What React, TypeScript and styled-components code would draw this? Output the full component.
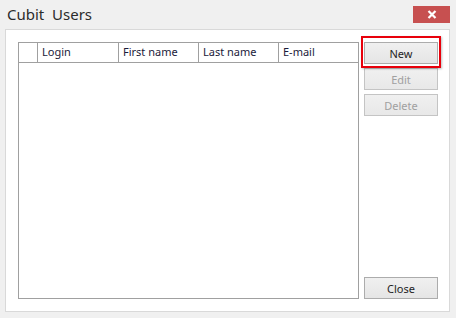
import styled, { createGlobalStyle } from "styled-components";

const GlobalStyle = createGlobalStyle`
  html, body {
    margin: 0;
    padding: 0;
    background: #f0f0f0;
  }
  body {
    font-family: "Noto Sans", "Open Sans", sans-serif;
    font-size: 11px;
    color: #1e1e1e;
  }
`;

const Window = styled.div`
  width: 456px;
  height: 318px;
  box-sizing: border-box;
  display: flex;
  flex-direction: column;
  padding: 0 6px 6px 5px;
`;

const TitleBar = styled.div`
  height: 29px;
  display: flex;
  align-items: flex-start;
  justify-content: space-between;
`;

const Title = styled.div`
  font-size: 15px;
  color: #2b2b2b;
  padding: 4px 0 0 2px;
  white-space: pre;
`;

const CloseX = styled.button`
  width: 37px;
  height: 17px;
  margin-top: 6px;
  border: none;
  padding: 0;
  background: #c75050;
  display: flex;
  align-items: center;
  justify-content: center;
`;

const Panel = styled.div`
  flex: 1;
  background: #ffffff;
  border: 1px solid #d9d9d9;
  padding: 12px 11px 12px 12px;
  display: flex;
  gap: 5px;
`;

const Grid = styled.div`
  flex: 1;
  border: 1px solid #a0a0a0;
  background: #fff;
`;

const HeaderRow = styled.div`
  display: grid;
  grid-template-columns: 19px 81px 80px 80px 1fr;
  height: 20px;
  box-sizing: border-box;
  border-bottom: 1px solid #a0a0a0;
`;

const HeaderCell = styled.div`
  border-right: 1px solid #a0a0a0;
  padding-left: 4px;
  line-height: 18px;
  color: #1a1a3a;
  white-space: nowrap;
  &:last-child {
    border-right: none;
  }
`;

const Side = styled.div`
  width: 74px;
  display: flex;
  flex-direction: column;
  gap: 4px;
`;

const Spacer = styled.div`
  flex: 1;
`;

const ButtonWrap = styled.div`
  position: relative;
  display: flex;
`;

const Highlight = styled.div`
  position: absolute;
  left: -3px;
  right: -3px;
  top: -6px;
  bottom: -4px;
  border: 2px solid #e8000b;
  box-shadow: 1px 1px 2px rgba(0, 0, 0, 0.25);
  pointer-events: none;
`;

const Button = styled.button<{ $disabled?: boolean }>`
  width: 74px;
  height: 22px;
  box-sizing: border-box;
  font-family: inherit;
  font-size: 11px;
  padding: 0;
  border: 1px solid ${(p) => (p.$disabled ? "#c4c4c4" : "#acacac")};
  background: ${(p) =>
    p.$disabled
      ? "linear-gradient(#f0f0f0, #e8e8e8)"
      : "linear-gradient(#f0f0f0, #e5e5e5)"};
  color: ${(p) => (p.$disabled ? "#a0a0a0" : "#1e1e1e")};
`;

export default function App() {
  return (
    <>
      <GlobalStyle />
      <Window>
        <TitleBar>
          <Title>Cubit  Users</Title>
          <CloseX aria-label="Close">
            <svg width="10" height="9" viewBox="0 0 10 9">
              <path d="M1.5 1 L8.5 8 M8.5 1 L1.5 8" stroke="#fff" strokeWidth="2.2" />
            </svg>
          </CloseX>
        </TitleBar>
        <Panel>
          <Grid>
            <HeaderRow>
              <HeaderCell />
              <HeaderCell>Login</HeaderCell>
              <HeaderCell>First name</HeaderCell>
              <HeaderCell>Last name</HeaderCell>
              <HeaderCell>E-mail</HeaderCell>
            </HeaderRow>
          </Grid>
          <Side>
            <ButtonWrap>
              <Button>New</Button>
              <Highlight />
            </ButtonWrap>
            <Button $disabled>Edit</Button>
            <Button $disabled>Delete</Button>
            <Spacer />
            <Button>Close</Button>
          </Side>
        </Panel>
      </Window>
    </>
  );
}
